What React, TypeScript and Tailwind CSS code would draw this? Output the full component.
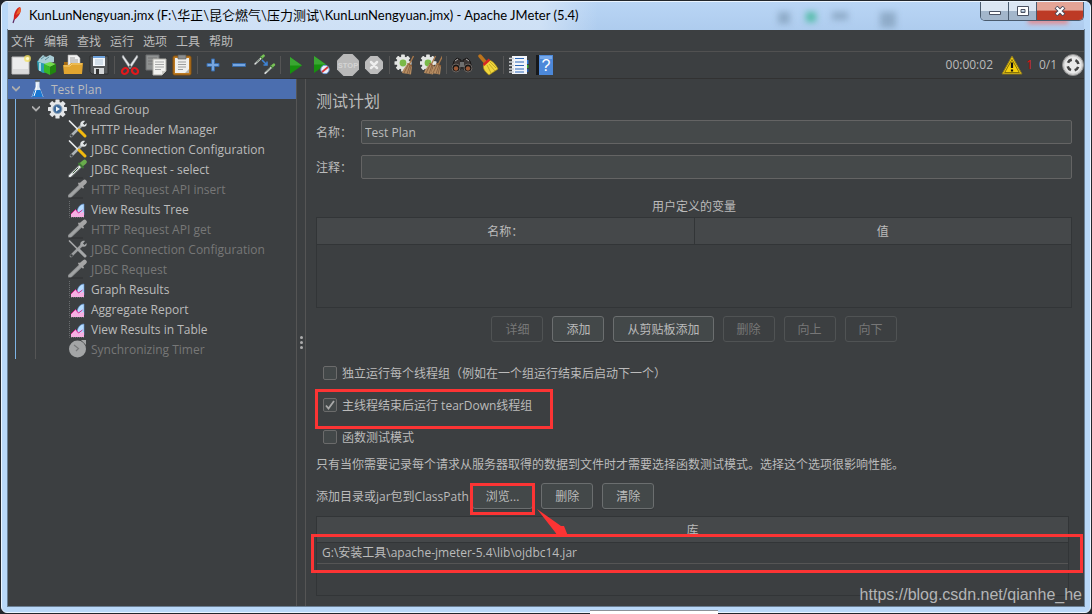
import React, { useState } from "react";
import clsx from "clsx";

type IconName =
  | "new" | "templates" | "open" | "save" | "cut" | "copy" | "paste" | "plus" | "minus" | "toggle"
  | "start" | "startNoPause" | "stop" | "shutdown" | "clear" | "clearAll" | "search" | "broom" | "list" | "help";

const gearTeeth = [0, 45, 90, 135, 180, 225, 270, 315];

function Gear({ cx, cy, r, color, hub }: { cx: number; cy: number; r: number; color: string; hub: string }) {
  return (
    <g>
      {gearTeeth.map((a) => (
        <rect key={a} x={cx - r * 0.22} y={cy - r} width={r * 0.44} height={r * 0.5} rx="0.6" fill={color} transform={`rotate(${a} ${cx} ${cy})`} />
      ))}
      <circle cx={cx} cy={cy} r={r * 0.76} fill={color} />
      <circle cx={cx} cy={cy} r={r * 0.4} fill={hub} />
    </g>
  );
}

function Straw({ x, y }: { x: number; y: number }) {
  return (
    <g transform={`translate(${x} ${y})`}>
      <path d="M11.5 0 7 9" stroke="#a9794b" strokeWidth="1.4" />
      <path d="M6 7 1 14l-1 3 3 .6 6 .8 1-8z" fill="#b68d62" />
      <path d="m6 9-4 8M8 9l-3 9M9 10l-2 8" stroke="#77553a" strokeWidth=".7" />
      <path d="M5.5 7.5 10 10" stroke="#8c5c34" strokeWidth="1.2" />
    </g>
  );
}

function Pipette({ cap = "#78c257", body = "#e6e8e8", dim = false }: { cap?: string; body?: string; dim?: boolean }) {
  return (
    <g strokeLinecap="round">
      <path d="M2 17 13 6.500" stroke={dim ? "#8e9091" : "#6d7172"} strokeWidth="4" />
      <path d="M2 17 12.500 7" stroke={body} strokeWidth="2.200" />
      {!dim && <path d="m5 14 5-5" stroke="#3e5f3e" strokeWidth="1" />}
      <path d="M13.500 5.500 16.500 3" stroke={cap} strokeWidth="4.500" />
      <path d="m11 4.500 4 4" stroke={dim ? "#a5a5a5" : "#3f7a35"} strokeWidth="1.800" />
    </g>
  );
}

const toolbarArt: Record<IconName, React.ReactNode> = {
  new: (
    <>
      <path d="M2 3h17v17H2z" fill="#ececec" stroke="#bcbcbc" />
      <path d="M3 15h15v4H3z" fill="#dadada" />
      <circle cx="17.500" cy="4.500" r="3.500" fill="#f5e15e" opacity=".75" />
      <circle cx="17.500" cy="4.500" r="1.600" fill="#fffbd0" />
    </>
  ),
  templates: (
    <>
      <path d="m1 7 6-2 5 2v11l-5 1-5-3z" fill="#2c9cb0" />
      <path d="m3 5 4-4 3 2 4-2 4 2v5l-8 2-8-2z" fill="#a9cdd6" />
      <path d="m5 5 4-3M9 6l4-3" stroke="#5e8e9b" />
      <path d="M4 9v8" stroke="#d2eff5" strokeWidth="1.500" />
      <path d="m8 10 6-2 6 2-6 3z" fill="#74dd4b" />
      <path d="m8 10 6 3v8l-6-3z" fill="#37b925" />
      <path d="m14 13 6-3v8l-6 3z" fill="#21860f" />
    </>
  ),
  open: (
    <>
      <path d="M2 8h7l1 1h10v11H2z" fill="#a66b12" />
      <path d="M6 1h9l3 3v9H6z" fill="#f1f1f1" stroke="#aaa" strokeWidth=".6" />
      <path d="M8 4h5M8 6h8M8 8h8" stroke="#8c8c8c" strokeWidth=".8" />
      <path d="M1 11h6l2-2h12l-1 11H2z" fill="#e1a530" />
      <path d="M2 12h6l2-2h10" stroke="#f7cf74" fill="none" />
    </>
  ),
  save: (
    <>
      <path d="M2 2h18v18H4l-2-2z" fill="#55585a" stroke="#2c2e2f" />
      <path d="M5 2h12v10H5z" fill="#f3f7fb" />
      <path d="M5 2h12v2H5z" fill="#6fa3dd" />
      <path d="M7 6h8M7 8h8M7 10h8" stroke="#a0b7cd" strokeWidth=".8" />
      <path d="M6 14h10v6H6z" fill="#d3d6d7" />
      <path d="M8 15h3v5H8z" fill="#333" />
    </>
  ),
  cut: (
    <>
      <path d="m4 1 8.500 12-2 1.500L3 3zM18 1 9.500 13l2 1.500L19 3z" fill="#e4e6e8" stroke="#8e9396" strokeWidth=".5" />
      <ellipse cx="6" cy="17" rx="3.200" ry="2.700" fill="none" stroke="#e0181c" strokeWidth="2.200" transform="rotate(-35 6 17)" />
      <ellipse cx="16" cy="17" rx="3.200" ry="2.700" fill="none" stroke="#e0181c" strokeWidth="2.200" transform="rotate(35 16 17)" />
    </>
  ),
  copy: (
    <>
      <path d="M1 1h13v15H1z" fill="#8f9292" stroke="#6d6f70" />
      <path d="M3 4h9M3 7h9M3 10h9" stroke="#777" />
      <path d="M8 5h13v12l-4 4H8z" fill="#f2f2ef" stroke="#b0b0ab" />
      <path d="M10 8h9M10 10.500h9M10 13h9M10 15.500h6" stroke="#a5a7a7" />
      <path d="M17 21v-4h4" fill="#cacac5" />
    </>
  ),
  paste: (
    <>
      <rect x="2" y="2" width="18" height="19" rx="1.500" fill="#bd7a20" stroke="#88530e" />
      <path d="M4 4h14v15H4z" fill="#f0f0ed" />
      <path d="M7 1h8v4H7z" fill="#8b8e90" stroke="#5b5e60" strokeWidth=".7" />
      <path d="M7 8h8M7 10.500h8M7 13h8M7 15.500h5" stroke="#9b9d9d" />
      <path d="m14 19 4-4v4z" fill="#b5b5b0" />
    </>
  ),
  plus: <path d="M9.500 5h3v4.500H17v3h-4.500V17h-3v-4.500H5v-3h4.500z" fill="#76a6e0" stroke="#386ba8" />,
  minus: <path d="M4.500 9.500h13v3h-13z" fill="#76a6e0" stroke="#386ba8" />,
  toggle: (
    <>
      <g transform="translate(0 0) scale(.58)"><Pipette /></g>
      <g transform="translate(10 9) scale(.6)"><Pipette /></g>
      <path d="m8 6 5 5m0-3.500V11H9.500" stroke="#3e85d8" strokeWidth="1.500" fill="none" />
    </>
  ),
  start: (
    <>
      <path d="m5 3 12 8.500L5 20z" fill="#17900f" />
      <path d="m5 3 12 8.500H5z" fill="#3aa632" />
    </>
  ),
  startNoPause: (
    <>
      <path d="m3 2 12 8.500L3 19z" fill="#17900f" />
      <path d="m3 2 12 8.500H3z" fill="#3aa632" />
      <circle cx="14" cy="15.500" r="4.200" fill="#e9effa" stroke="#6f9bd8" />
      <path d="m11 18 6-5" stroke="#d63636" strokeWidth="1.800" />
    </>
  ),
  stop: (
    <>
      <path d="M6.500 0h9L22 6.500v9L15.500 22h-9L0 15.500v-9z" fill="#b9b9b9" />
      <text x="11" y="14" textAnchor="middle" fontSize="7.500" fontWeight="700" fontFamily="Liberation Sans, sans-serif" fill="#d4d4d4">STOP</text>
    </>
  ),
  shutdown: (
    <>
      <path d="M7.500 2h7l5.500 5.500v7L14.500 20h-7L2 14.500v-7z" fill="#bcbcbc" />
      <path d="m8 8 6 6m0-6-6 6" stroke="#ededed" strokeWidth="2.500" strokeLinecap="round" />
    </>
  ),
  clear: (
    <>
      <Gear cx={9} cy={9} r={8.5} color="#e3e5e3" hub="#79b948" />
      <Straw x={8} y={2} />
    </>
  ),
  clearAll: (
    <>
      <Gear cx={8} cy={9} r={8.5} color="#e3e5e3" hub="#79b948" />
      <Straw x={4} y={2} />
      <Straw x={11} y={2} />
    </>
  ),
  search: (
    <>
      <path d="M3 7 6 4l4 2v9l-9-1zM19 7l-3-3-4 2v9l9-1z" fill="#3b3534" stroke="#191717" />
      <path d="M9 8h4v5H9z" fill="#6f6f6f" />
      <path d="m4 7 3-2M15 5l3 2" stroke="#aaa" />
      <circle cx="5" cy="14" r="4" fill="#171616" stroke="#6a6461" />
      <circle cx="17" cy="14" r="4" fill="#171616" stroke="#6a6461" />
      <circle cx="5" cy="14.500" r="2.200" fill="#9c5936" />
      <circle cx="17" cy="14.500" r="2.200" fill="#9c5936" />
    </>
  ),
  broom: (
    <>
      <path d="m3 2 6 7" stroke="#bd741c" strokeWidth="3.500" strokeLinecap="round" />
      <path d="m7 10 5-4c4 1 7 5 9 9l-9 6C8 18 5 14 7 10z" fill="#f0d63c" stroke="#a98c12" strokeWidth=".7" />
      <path d="m10 11 4 8m-2-9 6 7m-5-9 6 6" stroke="#b89d1d" strokeWidth=".8" />
      <path d="m6.500 11 6-5.500" stroke="#d82624" strokeWidth="2.400" />
    </>
  ),
  list: (
    <>
      <path d="M4 2h15v18H4z" fill="#f2f5fa" />
      <path d="M19 6h1.500v4H19z" fill="#2c79dc" />
      <path d="M19 11h1.500v3H19z" fill="#37a834" />
      <path d="M19 15h1.500v3H19z" fill="#225ab0" />
      <path d="M7 4.500h9M7 8h9M7 11.500h9M7 15h9M7 18h9" stroke="#2d68b8" strokeWidth="1.200" />
      <path d="M1 4.500h5M1 8h5M1 11.500h5M1 15h5M1 18h5" stroke="#cdd0d2" strokeWidth="1.500" />
    </>
  ),
  help: (
    <>
      <path d="M2 1h4v20H2z" fill="#17191c" />
      <path d="M5 1h14v20H5z" fill="#4c88d9" />
      <path d="M6 2h12v3H6z" fill="#76a8e9" />
      <text x="12" y="17" textAnchor="middle" fontSize="16" fontFamily="Liberation Sans, sans-serif" fill="#fff">?</text>
    </>
  ),
};

const toolbarGroups: { icon: IconName; label: string }[][] = [
  [
    { icon: "new", label: "新建" },
    { icon: "templates", label: "模板" },
    { icon: "open", label: "打开" },
    { icon: "save", label: "保存" },
  ],
  [
    { icon: "cut", label: "剪切" },
    { icon: "copy", label: "复制" },
    { icon: "paste", label: "粘贴" },
  ],
  [
    { icon: "plus", label: "展开" },
    { icon: "minus", label: "收起" },
    { icon: "toggle", label: "切换" },
  ],
  [
    { icon: "start", label: "启动" },
    { icon: "startNoPause", label: "不停顿启动" },
    { icon: "stop", label: "停止" },
    { icon: "shutdown", label: "关闭" },
  ],
  [
    { icon: "clear", label: "清除" },
    { icon: "clearAll", label: "清除全部" },
  ],
  [
    { icon: "search", label: "查找" },
    { icon: "broom", label: "重置查找" },
  ],
  [
    { icon: "list", label: "函数助手" },
    { icon: "help", label: "帮助" },
  ],
];

type NodeKind = "plan" | "group" | "config" | "sampler" | "report" | "timer";

function NodeIcon({ kind, dim }: { kind: NodeKind; dim?: boolean }) {
  return (
    <svg viewBox="0 0 20 20" className="size-5 shrink-0" fill="none" aria-hidden="true">
      {kind === "plan" && (
        <>
          <path d="M7.500 2h4v6l4 10h-12l4-10z" fill="#dbe7f3" />
          <path d="M6.500 11h6l2.500 7H4z" fill="#1b78d2" />
          <path d="m9 4-1 7-2 6" stroke="#fff" />
          <path d="M7 2h5" stroke="#52606d" strokeWidth="1.500" />
        </>
      )}
      {kind === "group" && (
        <>
          <Gear cx={9.5} cy={10} r={9.5} color="#e4e6e8" hub="#31567e" />
          <circle cx="9.500" cy="10" r="4.500" fill="#3d6a9b" stroke="#8fa5ba" />
          <path d="m8 7.500 4 2.500-4 2.500z" fill="#f1f6fa" />
        </>
      )}
      {kind === "config" && (
        <g strokeLinecap="round">
          <path d="M3 17 14 6" stroke={dim ? "#9c9e9f" : "#aeb4b7"} strokeWidth="2.600" />
          <path d="M13 7c-2-3 1-6 4-5l-2 2.500 1.500 1.500L18.500 4c1 3-2 5-5.500 3z" fill={dim ? "#a5a7a8" : "#dfe3e5"} />
          <circle cx="3.500" cy="16.500" r="1.200" fill="#3c3f41" />
          <path d="m1.500 2 8.500 8.500" stroke={dim ? "#a5a7a8" : "#e8eaeb"} strokeWidth="1.700" />
          <path d="m11 11 6 6" stroke={dim ? "#a5a7a8" : "#f2b90f"} strokeWidth="3" />
        </g>
      )}
      {kind === "sampler" && (
        <>
          <Pipette dim={dim} cap={dim ? "#a5a5a5" : "#69ad4c"} body={dim ? "#a2a4a5" : "#eef1f1"} />
          <path d="M1 19h14" stroke="#2f3133" />
        </>
      )}
      {kind === "report" && (
        <>
          <path d="M1.500 2v16.500H17" stroke="#6a6d6f" strokeDasharray="1 1" />
          <path d="M9 14c0-5 3-9 7-9v11l-4 1z" fill="#b7dcff" stroke="#5d8fd0" strokeWidth=".6" />
          <path d="M3 18v-3l4.500-4.500 3 3.500 5.500-1v5z" fill="#f6b0e2" />
          <path d="m3 15 4.500-4.500 3 3.500 4-3" stroke="#d5258e" />
        </>
      )}
      {kind === "timer" && (
        <>
          <circle cx="9.500" cy="10" r="8.500" fill="#a3a5a6" />
          <path d="M13 1h5v5z" fill="#a3a5a6" />
          <path d="m6 6 4.500 3.500L8 12" stroke="#77797a" strokeWidth="1.200" />
        </>
      )}
    </svg>
  );
}

const treeLeaves: { label: string; kind: NodeKind; dim?: boolean }[] = [
  { label: "HTTP Header Manager", kind: "config" },
  { label: "JDBC Connection Configuration", kind: "config" },
  { label: "JDBC Request - select", kind: "sampler" },
  { label: "HTTP Request API insert", kind: "sampler", dim: true },
  { label: "View Results Tree", kind: "report" },
  { label: "HTTP Request API get", kind: "sampler", dim: true },
  { label: "JDBC Connection Configuration", kind: "config", dim: true },
  { label: "JDBC Request", kind: "sampler", dim: true },
  { label: "Graph Results", kind: "report" },
  { label: "Aggregate Report", kind: "report" },
  { label: "View Results in Table", kind: "report" },
  { label: "Synchronizing Timer", kind: "timer", dim: true },
];

function TreeRow({
  label, kind, dim, selected, open, onToggle,
}: {
  label: string; kind: NodeKind; dim?: boolean; selected?: boolean; open?: boolean; onToggle?: () => void;
}) {
  return (
    <div className={clsx("flex h-5 items-center pl-1 whitespace-nowrap", selected && "bg-[#4b6eaf]", dim && "text-[#777777]")}>
      {onToggle ? (
        <button type="button" aria-label={label} aria-expanded={open} onClick={onToggle} className="w-2">
          <svg viewBox="0 0 8 6" className={clsx("h-1.5 w-2", !open && "-rotate-90")} fill="none">
            <path d="m0 .5 4 4 4-4" stroke="#adadad" strokeWidth="1.800" />
          </svg>
        </button>
      ) : (
        <span className="w-2" />
      )}
      <span className="ml-2 mr-[3px] flex"><NodeIcon kind={kind} dim={dim} /></span>
      <span className="pt-0.5">{label}</span>
    </div>
  );
}

function TestTree() {
  const [planOpen, setPlanOpen] = useState(true);
  const [groupOpen, setGroupOpen] = useState(true);
  return (
    <ul className="w-[289px] shrink-0 border-r border-[#555555]">
      <li>
        <TreeRow label="Test Plan" kind="plan" selected open={planOpen} onToggle={() => setPlanOpen(!planOpen)} />
        {planOpen && (
          <ul className="ml-[7px] border-l border-[#7db4e6] pl-3">
            <li>
              <TreeRow label="Thread Group" kind="group" open={groupOpen} onToggle={() => setGroupOpen(!groupOpen)} />
              {groupOpen && (
                <ul className="ml-[7px] border-l border-[#555555] pl-3">
                  {treeLeaves.map((leaf, i) => (
                    <li key={i}><TreeRow {...leaf} /></li>
                  ))}
                </ul>
              )}
            </li>
          </ul>
        )}
      </li>
    </ul>
  );
}

function PushButton({ children, disabled }: { children: React.ReactNode; disabled?: boolean }) {
  return (
    <button
      type="button"
      disabled={disabled}
      className={clsx(
        "h-[26px] rounded-[3px] border px-[13px] pt-0.5 whitespace-nowrap",
        disabled ? "border-[#505354] text-[#777777]" : "border-[#6b6e6f] bg-[#434849] shadow-[0_1px_0_#343739]"
      )}
    >
      {children}
    </button>
  );
}

function CheckRow({ label, checked, marked }: { label: string; checked?: boolean; marked?: boolean }) {
  return (
    <div className="relative flex h-5 items-center pl-[7px]">
      <label className="flex items-center">
        <span className="relative flex">
          <input type="checkbox" defaultChecked={checked} className="peer size-3.5 appearance-none rounded-[2px] border border-[#6b6b6b] bg-[#434849]" />
          <svg viewBox="0 0 14 14" className="pointer-events-none absolute inset-0 hidden size-3.5 peer-checked:block" fill="none">
            <path d="m3 7.500 2.500 3L11 3" stroke="#a9a9a9" strokeWidth="1.800" />
          </svg>
        </span>
        <span className="ml-[5px] pt-0.5">{label}</span>
      </label>
      {marked && <span className="pointer-events-none absolute -top-1.5 -left-px h-10 w-[238px] border-3 border-[#fc3434]" />}
    </div>
  );
}

function Field({ id, label, value }: { id: string; label: string; value: string }) {
  return (
    <div className="flex items-center">
      <label htmlFor={id} className="w-[45px] shrink-0 pt-0.5">{label}</label>
      <input id={id} defaultValue={value} className="h-6 min-w-0 flex-1 rounded-[2px] border border-[#646464] bg-[#45494a] px-[3px] outline-none" />
    </div>
  );
}

function PlanPanel() {
  return (
    <main className="min-w-0 flex-1 border-l border-[#555555] pr-3 pl-2.5">
      <h1 className="mt-2.5 h-6 text-[16px] leading-6">测试计划</h1>
      <div className="mt-[7px] flex flex-col gap-[11px]">
        <Field id="plan-name" label="名称：" value="Test Plan" />
        <Field id="plan-comment" label="注释：" value="" />
      </div>

      <h2 className="mt-[18px] h-5 text-center leading-5">用户定义的变量</h2>
      <div className="h-[91px] border border-[#323537]">
        <table className="w-full table-fixed border-collapse">
          <thead>
            <tr className="h-[26px] border-b border-[#323537] bg-[#45484a]">
              <th className="border-r border-[#323537] pt-0.5 font-normal">名称：</th>
              <th className="pt-0.5 font-normal">值</th>
            </tr>
          </thead>
        </table>
      </div>
      <div className="mt-2 flex justify-center gap-[9px]">
        <PushButton disabled>详细</PushButton>
        <PushButton>添加</PushButton>
        <PushButton>从剪贴板添加</PushButton>
        <PushButton disabled>删除</PushButton>
        <PushButton disabled>向上</PushButton>
        <PushButton disabled>向下</PushButton>
      </div>

      <div className="mt-[21px] flex flex-col gap-3">
        <CheckRow label="独立运行每个线程组（例如在一个组运行结束后启动下一个）" />
        <CheckRow label="主线程结束后运行 tearDown线程组" checked marked />
        <CheckRow label="函数测试模式" />
      </div>
      <p className="mt-2 leading-5">只有当你需要记录每个请求从服务器取得的数据到文件时才需要选择函数测试模式。选择这个选项很影响性能。</p>

      <div className="mt-2 flex items-center">
        <span className="pt-0.5">添加目录或jar包到ClassPath</span>
        <span className="relative ml-[3px] flex">
          <PushButton>浏览...</PushButton>
          <span className="pointer-events-none absolute -inset-x-0.5 top-0 -bottom-1.5 border-3 border-[#fc3434]" />
          <svg viewBox="0 0 36 28" className="pointer-events-none absolute top-full left-full z-10 h-7 w-9" fill="#fc3434">
            <path d="M4 0 28 17 31 17 35 27 24 26 22 23z" />
          </svg>
        </span>
        <span className="ml-2 flex gap-[9px]">
          <PushButton>删除</PushButton>
          <PushButton>清除</PushButton>
        </span>
      </div>

      <div className="relative mt-[7px] mr-[3px] mb-2.5 h-20 border border-[#323537]">
        <table className="w-full border-collapse">
          <thead>
            <tr className="h-[25px] border-b border-[#323537] bg-[#45484a]">
              <th className="pt-1 font-normal">库</th>
            </tr>
          </thead>
          <tbody>
            <tr className="h-[21px] border-b border-[#555555]">
              <td className="pl-[5px]">G:\安装工具\apache-jmeter-5.4\lib\ojdbc14.jar</td>
            </tr>
          </tbody>
        </table>
        <span className="pointer-events-none absolute top-[17px] -right-[15px] -left-1.5 h-[39px] border-3 border-[#fc3434]" />
      </div>
    </main>
  );
}

function TitleBar() {
  return (
    <header className="relative flex h-7 items-start overflow-hidden bg-linear-to-b from-[#b9d5f5] to-[#aeccee]">
      <div className="pointer-events-none absolute inset-y-0 left-0 w-[590px] bg-linear-to-r from-[#dce9f8] from-90% to-transparent opacity-70" />
      {/* aero glass: shapes showing through the bar */}
      <div className="pointer-events-none absolute top-2.5 right-[188px] flex gap-4 blur-[3px]">
        <span className="size-3 bg-[#8facc9]" />
        <span className="size-2.5 bg-[#54bda9]" />
        <span className="h-2 w-4 bg-[#8facc9]" />
        <span className="ml-4 size-4 bg-[#8facc9]" />
      </div>
      <div className="pointer-events-none absolute top-4 right-4 h-1.5 w-10 bg-[#e08d94] blur-[2px]" />
      <div className="relative flex items-center pt-1 text-black">
        <svg viewBox="0 0 12 18" className="ml-[3px] h-[18px] w-3" fill="none" aria-hidden="true">
          <path d="M2 17 4 11" stroke="#5c2a63" strokeWidth="1.200" />
          <path d="M3 14C2 8 5 2 9 1c2 3 0 9-6 13z" fill="#d3221f" />
          <path d="M5 9c1-3 2-6 4-8 1 2 1 4 0 6z" fill="#e8622a" />
        </svg>
        <span className="ml-1.5 font-['Lato','Noto_Sans_CJK_SC',sans-serif] text-[13px] whitespace-nowrap">{"KunLunNengyuan.jmx (F:\\华正\\昆仑燃气\\压力测试\\KunLunNengyuan.jmx) - Apache JMeter (5.4)"}</span>
      </div>
      <div className="relative ml-auto flex h-[19px] overflow-hidden rounded-b-[5px] border border-t-0 border-[#4a5b6e]">
        <button type="button" aria-label="最小化" className="flex w-7 items-center justify-center border-r border-[#4a5b6e] bg-linear-to-b from-[#dbe6f2] from-50% to-[#a3b6cb] to-50%">
          <svg viewBox="0 0 12 6" className="mt-1 h-1.5 w-3"><path d="M.5 1.500h11v3H.5z" fill="#fff" stroke="#4b5263" /></svg>
        </button>
        <button type="button" aria-label="最大化" className="flex w-7 items-center justify-center border-r border-[#4a5b6e] bg-linear-to-b from-[#dbe6f2] from-50% to-[#a3b6cb] to-50%">
          <svg viewBox="0 0 12 10" className="h-2.5 w-3"><path d="M.5.5h11v9H.5zM4 3.500h4v3H4z" fill="#fff" fillRule="evenodd" stroke="#4b5263" /></svg>
        </button>
        <button type="button" aria-label="关闭" className="flex w-[46px] items-center justify-center bg-linear-to-b from-[#e3a496] from-45% to-[#bd3a25] to-50%">
          <svg viewBox="0 0 12 10" className="h-2.5 w-3"><path d="m2 1 8 8m0-8L2 9" stroke="#4b4a5b" strokeWidth="4" /><path d="m2.500 1.500 7 7m0-7-7 7" stroke="#fff" strokeWidth="2.200" /></svg>
        </button>
      </div>
    </header>
  );
}

export default function App() {
  return (
    <div className="relative flex min-h-screen flex-col bg-[#22262c] px-px pt-px pb-0.5 font-['Open_Sans','Noto_Sans_CJK_SC',sans-serif] text-[12px] leading-4 text-[#bbbbbb]">
      <div className="flex flex-1 flex-col rounded-md border border-[#eaf4ff] bg-[#b9d8f8] px-1.5 pb-1.5">
        <TitleBar />
        <div className="flex flex-1 flex-col bg-[#3c3f41] shadow-[0_0_0_1px_#6a7f94]">
          <nav className="flex h-[22px] items-center gap-[9px] border-b border-[#515151] pt-0.5 pl-[3px]">
            {["文件", "编辑", "查找", "运行", "选项", "工具", "帮助"].map((m) => (
              <button key={m} type="button">{m}</button>
            ))}
          </nav>
          <div className="flex h-[27px] items-center border-b border-[#323232]">
            {toolbarGroups.map((group, i) => (
              <React.Fragment key={i}>
                {i > 0 && <span className="mx-0.5 h-[18px] w-px bg-[#555555]" />}
                {group.map(({ icon, label }) => (
                  <button key={icon} type="button" aria-label={label} className="flex w-[26px] justify-center">
                    <svg viewBox="0 0 22 22" className="size-[22px]" fill="none">{toolbarArt[icon]}</svg>
                  </button>
                ))}
              </React.Fragment>
            ))}
            <div className="ml-auto flex items-center">
              <span>00:00:02</span>
              <svg viewBox="0 0 22 20" className="ml-2 h-5 w-[22px]" fill="none" aria-hidden="true">
                <path d="M11 1 21 19H1z" fill="#f5cf0c" stroke="#8a7720" strokeLinejoin="round" />
                <path d="m11 4.500 7.300 13H3.700z" stroke="#3a320c" strokeWidth=".6" />
                <path d="M11 7.500V13M11 14.500v2" stroke="#111" strokeWidth="2.200" />
              </svg>
              <span className="ml-[3px] text-[#e01010]">1</span>
              <span className="ml-1.5">0/1</span>
              <svg viewBox="0 0 22 22" className="ml-[5px] size-[22px]" fill="none" aria-hidden="true">
                <circle cx="11" cy="11" r="10.500" fill="#cfcfcf" stroke="#8c8c8c" />
                <circle cx="11" cy="11" r="8.500" fill="#e9e9e9" />
                <circle cx="11" cy="11" r="5.500" stroke="#444" strokeWidth="2.600" strokeDasharray="4.800 3.840" strokeDashoffset="-1.900" />
              </svg>
            </div>
          </div>
          <div className="flex flex-1">
            <TestTree />
            <div className="flex w-2 shrink-0 flex-col items-center justify-center gap-0.5">
              <span className="size-[3px] rounded-full bg-[#adadad]" />
              <span className="size-[3px] rounded-full bg-[#adadad]" />
              <span className="size-[3px] rounded-full bg-[#adadad]" />
            </div>
            <PlanPanel />
          </div>
        </div>
      </div>
      <span className="pointer-events-none absolute right-2.5 bottom-2 font-['Liberation_Sans',sans-serif] text-[16px] leading-6 text-[#b4b5b6]">https://blog.csdn.net/qianhe_he</span>
      <span className="absolute bottom-0 left-[54%] h-[5px] w-32 border-t border-[#8b9299] bg-white" />
    </div>
  );
}
